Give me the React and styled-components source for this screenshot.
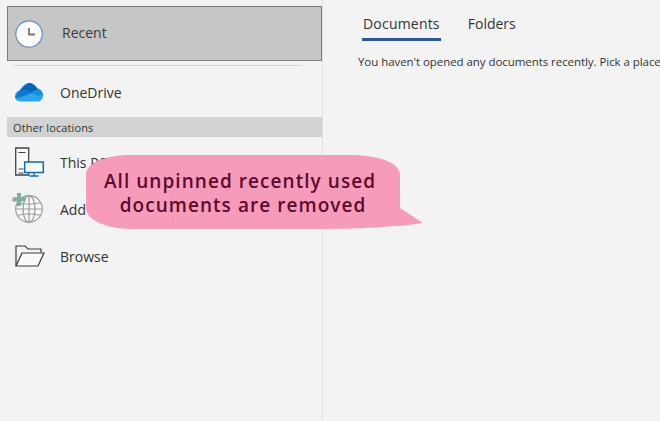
import React from "react";
import styled, { createGlobalStyle } from "styled-components";

const Global = createGlobalStyle`
  html, body { margin: 0; padding: 0; background: #f3f3f3; }
  body { width: 660px; height: 421px; overflow: hidden; font-family: "Open Sans", "Noto Sans", sans-serif; color: #323232; }
`;
const Page = styled.div`
  position: relative; width: 660px; height: 421px; overflow: hidden;
  display: flex; background: #f3f3f3;
`;
const Sidebar = styled.nav`
  width: 323px; height: 421px; flex: none; box-sizing: border-box;
  border-right: 1px solid #e1e1e1; padding-top: 6px;
  display: flex; flex-direction: column;
`;
const RecentButton = styled.div`
  margin-left: 7px; width: 315px; height: 55px; box-sizing: border-box;
  background: #c6c6c6; border: 1px solid #7b7b7b;
  display: flex; align-items: center; padding-left: 7px; gap: 19px;
  font-size: 14px; letter-spacing: 0; color: #3a3a3a;
`;
const RecentLabel = styled.span`
  margin-top: -2px;
`;
const Divider = styled.hr`
  margin: 4px 0 1px 13px; width: 290px; height: 1px; border: 0; background: #d4d4d4; flex: none;
`;
const Row = styled.div`
  height: ${p => p.$h}px; display: flex; align-items: center; flex: none;
  padding-left: ${p => p.$pad ?? 15}px; font-size: 14px; letter-spacing: 0; color: #333;
`;
const IconSlot = styled.span`
  width: ${p => p.$w ?? 45}px; flex: none; display: flex; align-items: center;
`;
const SectionHead = styled.div`
  margin-left: 7px; height: 20px; flex: none; background: #d2d2d2; font-size: 11px; letter-spacing: 0.1px;
  display: flex; align-items: center; padding-left: 6px; color: #333;
`;
const Main = styled.main`
  flex: 1; min-width: 0; padding: 0 0 0 35px; overflow: hidden;
`;
const Tabs = styled.div`
  display: flex; gap: 26px; padding-left: 4px; height: 41px;
`;
const Tab = styled.div`
  height: 41px; box-sizing: border-box; padding: 14px 1px 0; font-size: 14px;
  letter-spacing: ${p => (p.$active ? "0.2px" : "0")};
  line-height: 20px; color: #333; border-bottom: ${p => (p.$active ? "3px solid #2b579a" : "0")};
`;
const Notice = styled.p`
  margin: 11px 0 0; font-size: 11.5px; line-height: 20px; white-space: nowrap; color: #333; letter-spacing: -0.06px;
`;
const Callout = styled.div`
  position: absolute; left: 86px; top: 155px; width: 337px; height: 74px;
  display: flex; flex-direction: column; align-items: center; justify-content: center;
  padding: 2px 23px 0 0; box-sizing: border-box; text-align: center;
  font-size: 19px; font-weight: 600; line-height: 24.500px; letter-spacing: 1.05px; color: #5c0a2d;
`;
const CalloutShape = styled.svg`
  position: absolute; left: 0; top: 0; width: 337px; height: 74px;
`;
const CalloutLine = styled.span`
  position: relative; white-space: pre;
`;

const Clock = () => (
  <svg width="28" height="28" viewBox="0 0 28 28">
    <circle cx="14" cy="14" r="13.200" fill="#fff" stroke="#5d8fc4" strokeWidth="1.200" />
    <path d="M14 8v6.500h6" fill="none" stroke="#777" strokeWidth="1.800" />
  </svg>
);
const CLOUD = "M6 18.500C2 18.500 0 16 0 13C0 10 2 8 5 7.500C7 3 10.500 0 14.500 0C18 0 20.500 2 22 5.500C25.500 6 28 9 28 12.500C28 16 25.500 18.500 23 18.500Z";
const Cloud = () => (
  <svg width="28" height="19" viewBox="0 0 28 19">
    <clipPath id="cloudClip"><path d={CLOUD} /></clipPath>
    <g clipPath="url(#cloudClip)">
      <rect width="28" height="19" fill="#28a8ea" />
      <path d="M-1 16 4 7 10 6 17 10 9 13z" fill="#0f78d4" />
      <path d="M15 9 22 4 30 9V12L22 12.500z" fill="#1490df" />
      <path d="M4 8 14 -1 24 5 16 9.500 10 6.500z" fill="#0364b8" />
    </g>
  </svg>
);
const Pc = () => (
  <svg width="30" height="30" viewBox="0 0 30 30">
    <path d="M.7 1h13v27H.7z" fill="#f8f8f8" stroke="#444" strokeWidth="1.300" />
    <path d="M3.500 5.500h7M3.500 22h5M3.500 26h5" stroke="#444" strokeWidth="1.200" />
    <rect x="9.700" y="15" width="18.600" height="10.500" fill="#fafafa" stroke="#0a6cbd" strokeWidth="1.500" />
    <path d="M19 25.500v3M14.500 29h9" stroke="#0a6cbd" strokeWidth="1.300" />
  </svg>
);
const Globe = () => (
  <svg width="32" height="32" viewBox="0 0 32 32">
    <g fill="none" stroke="#9c9c9c" strokeWidth="1.200">
      <circle cx="17" cy="16" r="13.300" fill="#f8f8f8" />
      <ellipse cx="17" cy="16" rx="6" ry="13.300" />
      <path d="M17 2.700v26.600M5 9.500Q17 13 29 9.500M3.700 16H30.300M5 22.500Q17 19 29 22.500" />
    </g>
    <path d="M5 0h4v4.300H13.500V8.500H9V13H5V8.500H.5V4.300H5z" fill="#7fb0a6" />
  </svg>
);
const Folder = () => (
  <svg width="30" height="22" viewBox="0 0 30 22">
    <path d="M1 21V1h9l3 3h13v3.500" fill="none" stroke="#3a3a3a" strokeWidth="1.200" />
    <path d="M1 21 7 8h22l-6 13z" fill="#fafafa" stroke="#3a3a3a" strokeWidth="1.200" />
  </svg>
);

export default function App() {
  return (
    <Page>
      <Global />
      <Sidebar>
        <RecentButton><Clock /><RecentLabel>Recent</RecentLabel></RecentButton>
        <Divider />
        <Row $h={50}><IconSlot><Cloud /></IconSlot>OneDrive</Row>
        <SectionHead>Other locations</SectionHead>
        <Row $h={50}><IconSlot><Pc /></IconSlot>This PC</Row>
        <Row $h={44} $pad={12}><IconSlot $w={48}><Globe /></IconSlot>Add a Place</Row>
        <Row $h={50}><IconSlot><Folder /></IconSlot>Browse</Row>
      </Sidebar>
      <Main>
        <Tabs>
          <Tab $active>Documents</Tab>
          <Tab>Folders</Tab>
        </Tabs>
        <Notice>You haven't opened any documents recently. Pick a place</Notice>
      </Main>
      <Callout>
        <CalloutShape viewBox="0 0 337 74">
          <path
            d="M47 0H261C295 0 314 8 314 20V53L337 68C325 70 290 73.500 240 74H47C18 74 0 64 0 53V20C0 8 18 0 47 0Z"
            fill="#f69cba"
          />
        </CalloutShape>
        <CalloutLine>{"All unpinned recently used\u00a0"}</CalloutLine>
        <CalloutLine>documents are removed</CalloutLine>
      </Callout>
    </Page>
  );
}
